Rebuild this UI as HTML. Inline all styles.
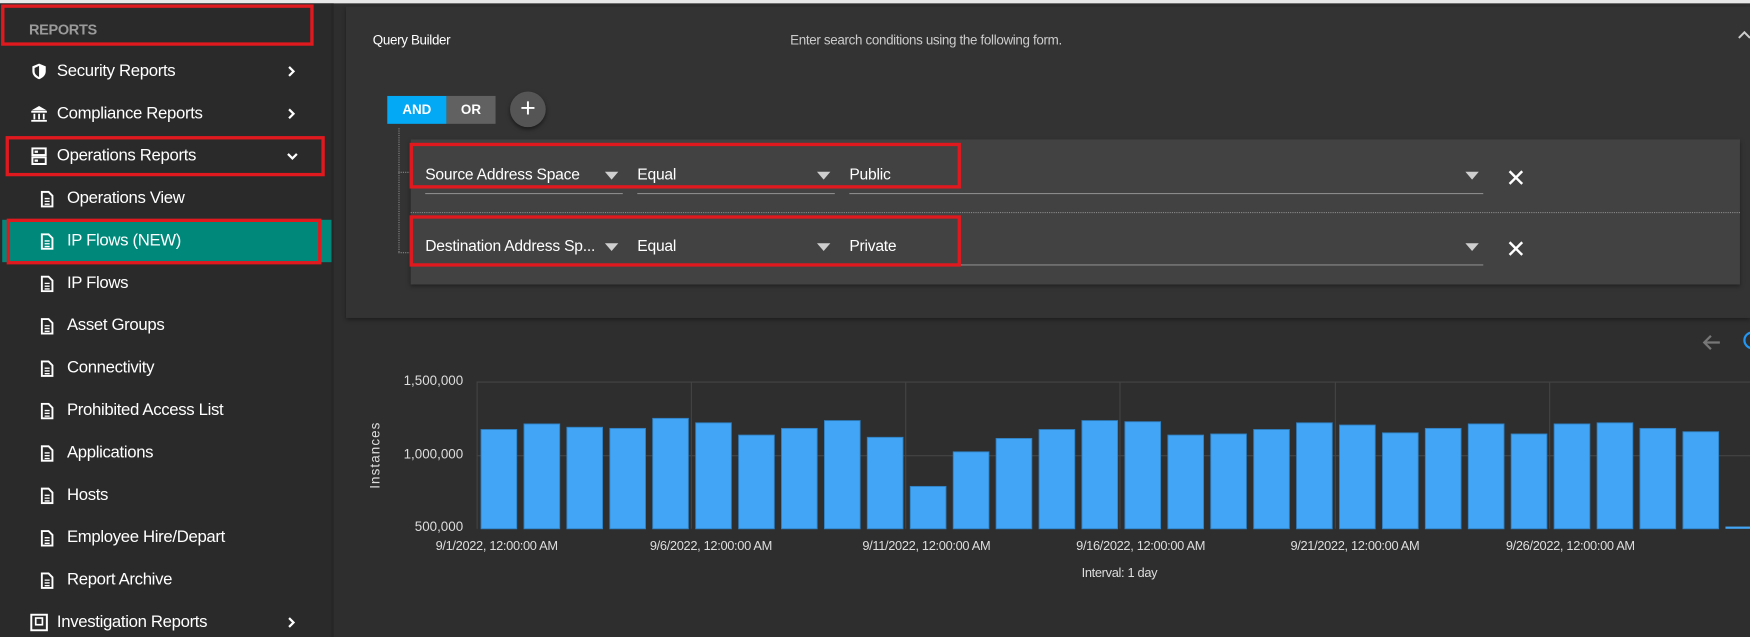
<!DOCTYPE html>
<html><head><meta charset="utf-8"><style>
html,body{margin:0;padding:0;width:1750px;height:637px;overflow:hidden;background:#2e2e2e;font-family:"Liberation Sans",sans-serif}
#w{position:absolute;left:0;top:0;width:1568px;height:571px;transform:scale(1.11607,1.1156);transform-origin:0 0;background:#2e2e2e}
.a{position:absolute}
.t{position:absolute;color:#fff;font-size:15px;white-space:nowrap;line-height:18px;letter-spacing:-0.3px}
.rb{position:absolute;border:3px solid #e0191f;box-sizing:border-box}
.doc{position:absolute}
.chev{position:absolute;left:256px}
.fl{position:absolute;color:#fff;font-size:14px;white-space:nowrap;letter-spacing:-0.2px}
.ul{position:absolute;height:1px;background:#8a8a8a}
.tri{position:absolute;width:0;height:0;border-left:6px solid transparent;border-right:6px solid transparent;border-top:7px solid #cfcfcf}
.xx{position:absolute;color:#fff;font-size:22px;line-height:22px}
.yl{position:absolute;color:#ddd;font-size:12px;text-align:right;width:80px}
.xl{position:absolute;color:#ddd;font-size:11.5px;white-space:nowrap;transform:translateX(-50%);letter-spacing:-0.3px}
</style></head><body><div id="w">
<div class="a" style="left:0;top:0;width:1568px;height:3px;background:#e8e8e8"></div>
<div class="a" style="left:0;top:3px;width:297px;height:568px;background:#2a2a2a"></div>
<div class="a" style="left:297px;top:3px;width:2px;height:568px;background:#262626"></div>
<div class="t" style="left:26px;top:18px;color:#9a9a9a;font-weight:bold;font-size:13px">REPORTS</div>
<div class="rb" style="left:1px;top:4px;width:280px;height:37px"></div>
<svg class="a" style="left:27px;top:56px" width="16" height="16" viewBox="0 0 16 16"><path d="M8 1 L14 3.5 V8 C14 11.5 11 14 8 15 C5 14 2 11.5 2 8 V3.5 Z" fill="#fff"/><path d="M8 3 V13 C6 12 4 10.5 4 8 V5 Z" fill="#2a2a2a"/></svg>
<div class="t" style="left:51px;top:55px">Security Reports</div>
<svg class="chev" style="top:58px" width="10" height="12" viewBox="0 0 10 12"><path d="M3 2 L7 6 L3 10" fill="none" stroke="#fff" stroke-width="2"/></svg>
<svg class="a" style="left:27px;top:94px" width="16" height="16" viewBox="0 0 16 16"><path d="M1 5 L8 1 L15 5 Z" fill="#fff"/><rect x="1" y="5.5" width="14" height="1.5" fill="#fff"/><rect x="3" y="8" width="1.6" height="5" fill="#fff"/><rect x="7.2" y="8" width="1.6" height="5" fill="#fff"/><rect x="11.4" y="8" width="1.6" height="5" fill="#fff"/><rect x="1" y="13.5" width="14" height="1.6" fill="#fff"/></svg>
<div class="t" style="left:51px;top:93px">Compliance Reports</div>
<svg class="chev" style="top:96px" width="10" height="12" viewBox="0 0 10 12"><path d="M3 2 L7 6 L3 10" fill="none" stroke="#fff" stroke-width="2"/></svg>
<svg class="a" style="left:28px;top:132px" width="14" height="16" viewBox="0 0 14 16"><rect x="1" y="1" width="12" height="6" fill="none" stroke="#fff" stroke-width="1.8"/><rect x="1" y="9" width="12" height="6" fill="none" stroke="#fff" stroke-width="1.8"/><rect x="3" y="3" width="3" height="2" fill="#fff"/><rect x="3" y="11" width="3" height="2" fill="#fff"/></svg>
<div class="t" style="left:51px;top:131px">Operations Reports</div>
<svg class="chev" style="top:135px" width="12" height="10" viewBox="0 0 12 10"><path d="M2 3 L6 7 L10 3" fill="none" stroke="#fff" stroke-width="2"/></svg>
<div class="rb" style="left:5px;top:122px;width:286px;height:36px"></div>
<div class="a" style="left:2px;top:197px;width:295px;height:38px;background:#00897b"></div>
<div class="rb" style="left:6px;top:196px;width:282px;height:41px"></div>
<svg width="0" height="0" style="position:absolute"><defs><symbol id="d" viewBox="0 0 12 15"><path d="M1.5 1 H7.5 L11 4.5 V14 H1.5 Z" fill="none" stroke="#fff" stroke-width="1.7"/><path d="M4 7 H8.5 M4 9.5 H8.5 M4 12 H8.5" stroke="#fff" stroke-width="1.2"/></symbol></defs></svg>
<svg class="doc" style="left:36px;top:171px" width="12" height="15"><use href="#d"/></svg><div class="t" style="left:60px;top:169px">Operations View</div>
<svg class="doc" style="left:36px;top:209px" width="12" height="15"><use href="#d"/></svg><div class="t" style="left:60px;top:207px">IP Flows (NEW)</div>
<svg class="doc" style="left:36px;top:247px" width="12" height="15"><use href="#d"/></svg><div class="t" style="left:60px;top:245px">IP Flows</div>
<svg class="doc" style="left:36px;top:285px" width="12" height="15"><use href="#d"/></svg><div class="t" style="left:60px;top:283px">Asset Groups</div>
<svg class="doc" style="left:36px;top:323px" width="12" height="15"><use href="#d"/></svg><div class="t" style="left:60px;top:321px">Connectivity</div>
<svg class="doc" style="left:36px;top:361px" width="12" height="15"><use href="#d"/></svg><div class="t" style="left:60px;top:359px">Prohibited Access List</div>
<svg class="doc" style="left:36px;top:399px" width="12" height="15"><use href="#d"/></svg><div class="t" style="left:60px;top:397px">Applications</div>
<svg class="doc" style="left:36px;top:437px" width="12" height="15"><use href="#d"/></svg><div class="t" style="left:60px;top:435px">Hosts</div>
<svg class="doc" style="left:36px;top:475px" width="12" height="15"><use href="#d"/></svg><div class="t" style="left:60px;top:473px">Employee Hire/Depart</div>
<svg class="doc" style="left:36px;top:513px" width="12" height="15"><use href="#d"/></svg><div class="t" style="left:60px;top:511px">Report Archive</div>
<svg class="a" style="left:27px;top:550px" width="16" height="16" viewBox="0 0 16 16"><rect x="1" y="1" width="14" height="14" fill="none" stroke="#fff" stroke-width="1.8"/><rect x="5" y="4" width="6" height="6" fill="none" stroke="#fff" stroke-width="1.5"/></svg>
<div class="t" style="left:51px;top:549px">Investigation Reports</div>
<svg class="chev" style="top:552px" width="10" height="12" viewBox="0 0 10 12"><path d="M3 2 L7 6 L3 10" fill="none" stroke="#fff" stroke-width="2"/></svg>

<div class="a" style="left:310px;top:6px;width:1258px;height:279px;background:#333;box-shadow:0 2px 4px rgba(0,0,0,.4)"></div>
<div class="t" style="left:334px;top:27px;font-size:12px">Query Builder</div>
<div class="t" style="left:708px;top:27px;font-size:12px;color:#ccc">Enter search conditions using the following form.</div>
<svg class="a" style="left:1556px;top:26px" width="12" height="10"><path d="M2 8 L7 3 L12 8" fill="none" stroke="#ccc" stroke-width="1.8"/></svg>
<div class="a" style="left:347px;top:86px;width:53px;height:25px;background:#03a9f4;color:#fff;font-size:12px;font-weight:bold;text-align:center;line-height:25px">AND</div>
<div class="a" style="left:400px;top:86px;width:44px;height:25px;background:#616161;color:#fff;font-size:12px;font-weight:bold;text-align:center;line-height:25px">OR</div>
<div class="a" style="left:457px;top:82px;width:32px;height:32px;border-radius:50%;background:#555;color:#fff;font-size:24px;text-align:center;line-height:31px;box-shadow:0 2px 4px rgba(0,0,0,.5)">+</div>
<div class="a" style="left:357px;top:115px;height:111px;border-left:1px dotted #888"></div>
<div class="a" style="left:368px;top:125px;width:1191px;height:130px;background:#424242;box-shadow:0 2px 4px rgba(0,0,0,.4)"></div>
<div class="a" style="left:357px;top:154px;width:11px;border-top:1px dotted #888"></div>
<div class="a" style="left:357px;top:226px;width:11px;border-top:1px dotted #888"></div>
<div class="a" style="left:368px;top:190px;width:1191px;border-top:1px dotted #888"></div>
<div class="fl" style="left:381px;top:148px">Source Address Space</div><div class="tri" style="left:542px;top:154px"></div><div class="ul" style="left:381px;top:173px;width:177px"></div>
<div class="fl" style="left:571px;top:148px">Equal</div><div class="tri" style="left:732px;top:154px"></div><div class="ul" style="left:571px;top:173px;width:177px"></div>
<div class="fl" style="left:761px;top:148px">Public</div><div class="tri" style="left:1313px;top:154px"></div><div class="ul" style="left:761px;top:173px;width:568px"></div>
<div class="xx" style="left:1349px;top:149px">✕</div>
<div class="rb" style="left:367px;top:128px;width:494px;height:41px"></div>
<div class="fl" style="left:381px;top:212px">Destination Address Sp...</div><div class="tri" style="left:542px;top:218px"></div><div class="ul" style="left:381px;top:237px;width:177px"></div>
<div class="fl" style="left:571px;top:212px">Equal</div><div class="tri" style="left:732px;top:218px"></div><div class="ul" style="left:571px;top:237px;width:177px"></div>
<div class="fl" style="left:761px;top:212px">Private</div><div class="tri" style="left:1313px;top:218px"></div><div class="ul" style="left:761px;top:237px;width:568px"></div>
<div class="xx" style="left:1349px;top:213px">✕</div>
<div class="rb" style="left:367px;top:193px;width:494px;height:46px"></div>

<svg class="a" style="left:1524px;top:299px" width="18" height="16"><path d="M17 8 H3 M9 2 L3 8 L9 14" fill="none" stroke="#777" stroke-width="2"/></svg>
<div class="a" style="left:1562px;top:297px;width:16px;height:16px;border-radius:50%;border:2px solid #2196f3;box-sizing:border-box"></div>

<svg class="a" style="left:0;top:0" width="1568" height="571">
<g stroke="#444" stroke-width="1">
<line x1="427" y1="342.5" x2="1568" y2="342.5"/><line x1="427" y1="408.5" x2="1568" y2="408.5"/>
<line x1="427.5" y1="342" x2="427.5" y2="474"/><line x1="619.5" y1="342" x2="619.5" y2="474"/><line x1="811.5" y1="342" x2="811.5" y2="474"/><line x1="1003.5" y1="342" x2="1003.5" y2="474"/><line x1="1196.5" y1="342" x2="1196.5" y2="474"/><line x1="1388.5" y1="342" x2="1388.5" y2="474"/>
</g>
<g fill="#42a5f5" stroke="#2f7fc0" stroke-width="0.8" id="bars"></g>
<rect x="1546" y="472" width="22" height="2" fill="#42a5f5"/>
<text x="340" y="408" fill="#ddd" font-size="12" font-family="Liberation Sans" text-anchor="middle" transform="rotate(-90 340 408)" letter-spacing="1">Instances</text>
</svg>
<div class="yl" style="left:335px;top:334px">1,500,000</div>
<div class="yl" style="left:335px;top:400px">1,000,000</div>
<div class="yl" style="left:335px;top:465px">500,000</div>
<div class="xl" style="left:445px;top:484px">9/1/2022, 12:00:00 AM</div>
<div class="xl" style="left:637px;top:484px">9/6/2022, 12:00:00 AM</div>
<div class="xl" style="left:830px;top:484px">9/11/2022, 12:00:00 AM</div>
<div class="xl" style="left:1022px;top:484px">9/16/2022, 12:00:00 AM</div>
<div class="xl" style="left:1214px;top:484px">9/21/2022, 12:00:00 AM</div>
<div class="xl" style="left:1407px;top:484px">9/26/2022, 12:00:00 AM</div>
<div class="xl" style="left:1003px;top:508px">Interval: 1 day</div>
</div>
<script>
var tops=[385,380,383,384,375,379,390,384,377,392,436,405,393,385,377,378,390,389,385,379,381,388,384,380,389,380,379,384,387];
var g=document.getElementById('bars'),s='';
for(var i=0;i<tops.length;i++){var x=431+i*38.46;s+='<rect x="'+x.toFixed(1)+'" y="'+tops[i]+'" width="32" height="'+(474-tops[i])+'"/>';}
g.innerHTML=s;
</script>
</body></html>
